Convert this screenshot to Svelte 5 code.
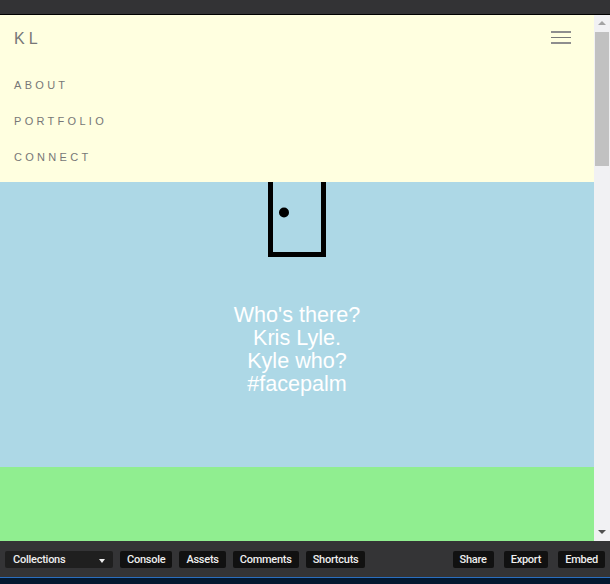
<script>
  const links = ["About", "Portfolio", "Connect"];
  const leftTools = ["Console", "Assets", "Comments", "Shortcuts"];
  const rightTools = ["Share", "Export", "Embed"];
</script>

<div class="editor">
  <div class="topbar"></div>

  <div class="preview">
    <div class="page">
      <header class="nav">
        <div class="brand-row">
          <span class="brand">KL</span>
          <button class="burger" aria-label="Menu">
            <span></span>
            <span class="thin"></span>
            <span></span>
          </button>
        </div>
        <ul class="links">
          {#each links as link}
            <li>{link}</li>
          {/each}
        </ul>
      </header>

      <section class="hero">
        <svg class="door" width="58" height="75" viewBox="0 0 58 75" aria-hidden="true">
          <path d="M2.5 0V72.5H55.5V0" fill="none" stroke="#000" stroke-width="5" />
          <circle cx="16" cy="30.5" r="5" fill="#000" />
        </svg>
        <p class="joke">
          Who's there?<br />
          Kris Lyle.<br />
          Kyle who?<br />
          #facepalm
        </p>
      </section>

      <section class="green"></section>
    </div>

    <div class="scrollbar">
      <div class="arrow up"></div>
      <div class="track"><div class="thumb"></div></div>
      <div class="arrow down"></div>
    </div>
  </div>

  <footer class="toolbar">
    <div class="group">
      <button class="tool collections">
        Collections
        <i class="caret"></i>
      </button>
      {#each leftTools as tool}
        <button class="tool">{tool}</button>
      {/each}
    </div>
    <div class="group right">
      {#each rightTools as tool}
        <button class="tool">{tool}</button>
      {/each}
    </div>
  </footer>
  <div class="taskbar"></div>
</div>

<style>
  :global(body) {
    background: #03182f;
  }

  .editor {
    width: 610px;
    height: 584px;
    display: flex;
    flex-direction: column;
    overflow: hidden;
    font-family: "Liberation Sans", Arial, sans-serif;
  }

  .topbar {
    height: 14px;
    background: #333335;
    border-bottom: 1px solid #000;
    flex: none;
  }

  .preview {
    height: 526px;
    display: flex;
    flex: none;
  }

  .page {
    width: 594px;
    display: flex;
    flex-direction: column;
  }

  .nav {
    height: 167px;
    background: lightyellow;
    color: #777;
    padding: 0 14px;
    box-sizing: border-box;
  }

  .brand-row {
    height: 46px;
    display: flex;
    justify-content: space-between;
    align-items: center;
    margin-bottom: 6px;
  }

  .brand {
    font-size: 16px;
    letter-spacing: 4px;
    padding-top: 2px;
  }

  .burger {
    width: 20px;
    margin: 0 9px 1px 0;
    padding: 0;
    border: 0;
    background: none;
    display: flex;
    flex-direction: column;
    gap: 4px;
  }

  .burger span {
    height: 2px;
    background: #8e8e8e;
  }

  .burger .thin {
    height: 1px;
    background: #777;
  }

  .links {
    list-style: none;
    margin: 0;
    padding: 0;
  }

  .links li {
    height: 36px;
    line-height: 36px;
    font-size: 11px;
    letter-spacing: 3.3px;
    text-transform: uppercase;
  }

  .hero {
    height: 285px;
    background: lightblue;
    display: flex;
    flex-direction: column;
    align-items: center;
  }

  .door {
    display: block;
  }

  .joke {
    margin: 46px 0 0;
    color: #fff;
    font-size: 21.6px;
    line-height: 23px;
    text-align: center;
  }

  .green {
    flex: 1;
    background: lightgreen;
  }

  .scrollbar {
    width: 16px;
    background: #f1f1f3;
    display: flex;
    flex-direction: column;
  }

  .track {
    flex: 1;
  }

  .thumb {
    height: 134px;
    background: #c1c1c1;
    margin-left: 1px;
    width: 14px;
  }

  .arrow {
    height: 17px;
    flex: none;
    position: relative;
  }

  .arrow::after {
    content: "";
    position: absolute;
    left: 4px;
    border-left: 4px solid transparent;
    border-right: 4px solid transparent;
  }

  .arrow.up::after {
    top: 6px;
    border-bottom: 4px solid #a3a3a3;
  }

  .arrow.down::after {
    top: 6px;
    border-top: 4px solid #505050;
  }

  .toolbar {
    height: 36px;
    flex: none;
    background: #343436;
    display: flex;
    justify-content: space-between;
    padding: 10px 5px 0;
    box-sizing: border-box;
  }

  .group {
    display: flex;
    gap: 7px;
  }

  .group.right {
    gap: 10px;
  }

  .tool {
    height: 17px;
    padding: 0 7px;
    border: 0;
    border-radius: 2px;
    background: #111;
    color: #eee;
    font-family: Roboto, sans-serif;
    font-size: 11px;
    font-weight: 500;
    letter-spacing: -0.25px;
    line-height: 17px;
    white-space: nowrap;
  }

  .collections {
    width: 108px;
    background: #1f1f1f;
    display: flex;
    justify-content: space-between;
    align-items: center;
    padding: 0 8px;
  }

  .caret {
    border-left: 3px solid transparent;
    border-right: 3px solid transparent;
    border-top: 4px solid #eee;
    margin-top: 2px;
  }

  .taskbar {
    flex: 1;
    background: #03182f;
    border-top: 1px solid #2a6fc0;
  }
</style>
